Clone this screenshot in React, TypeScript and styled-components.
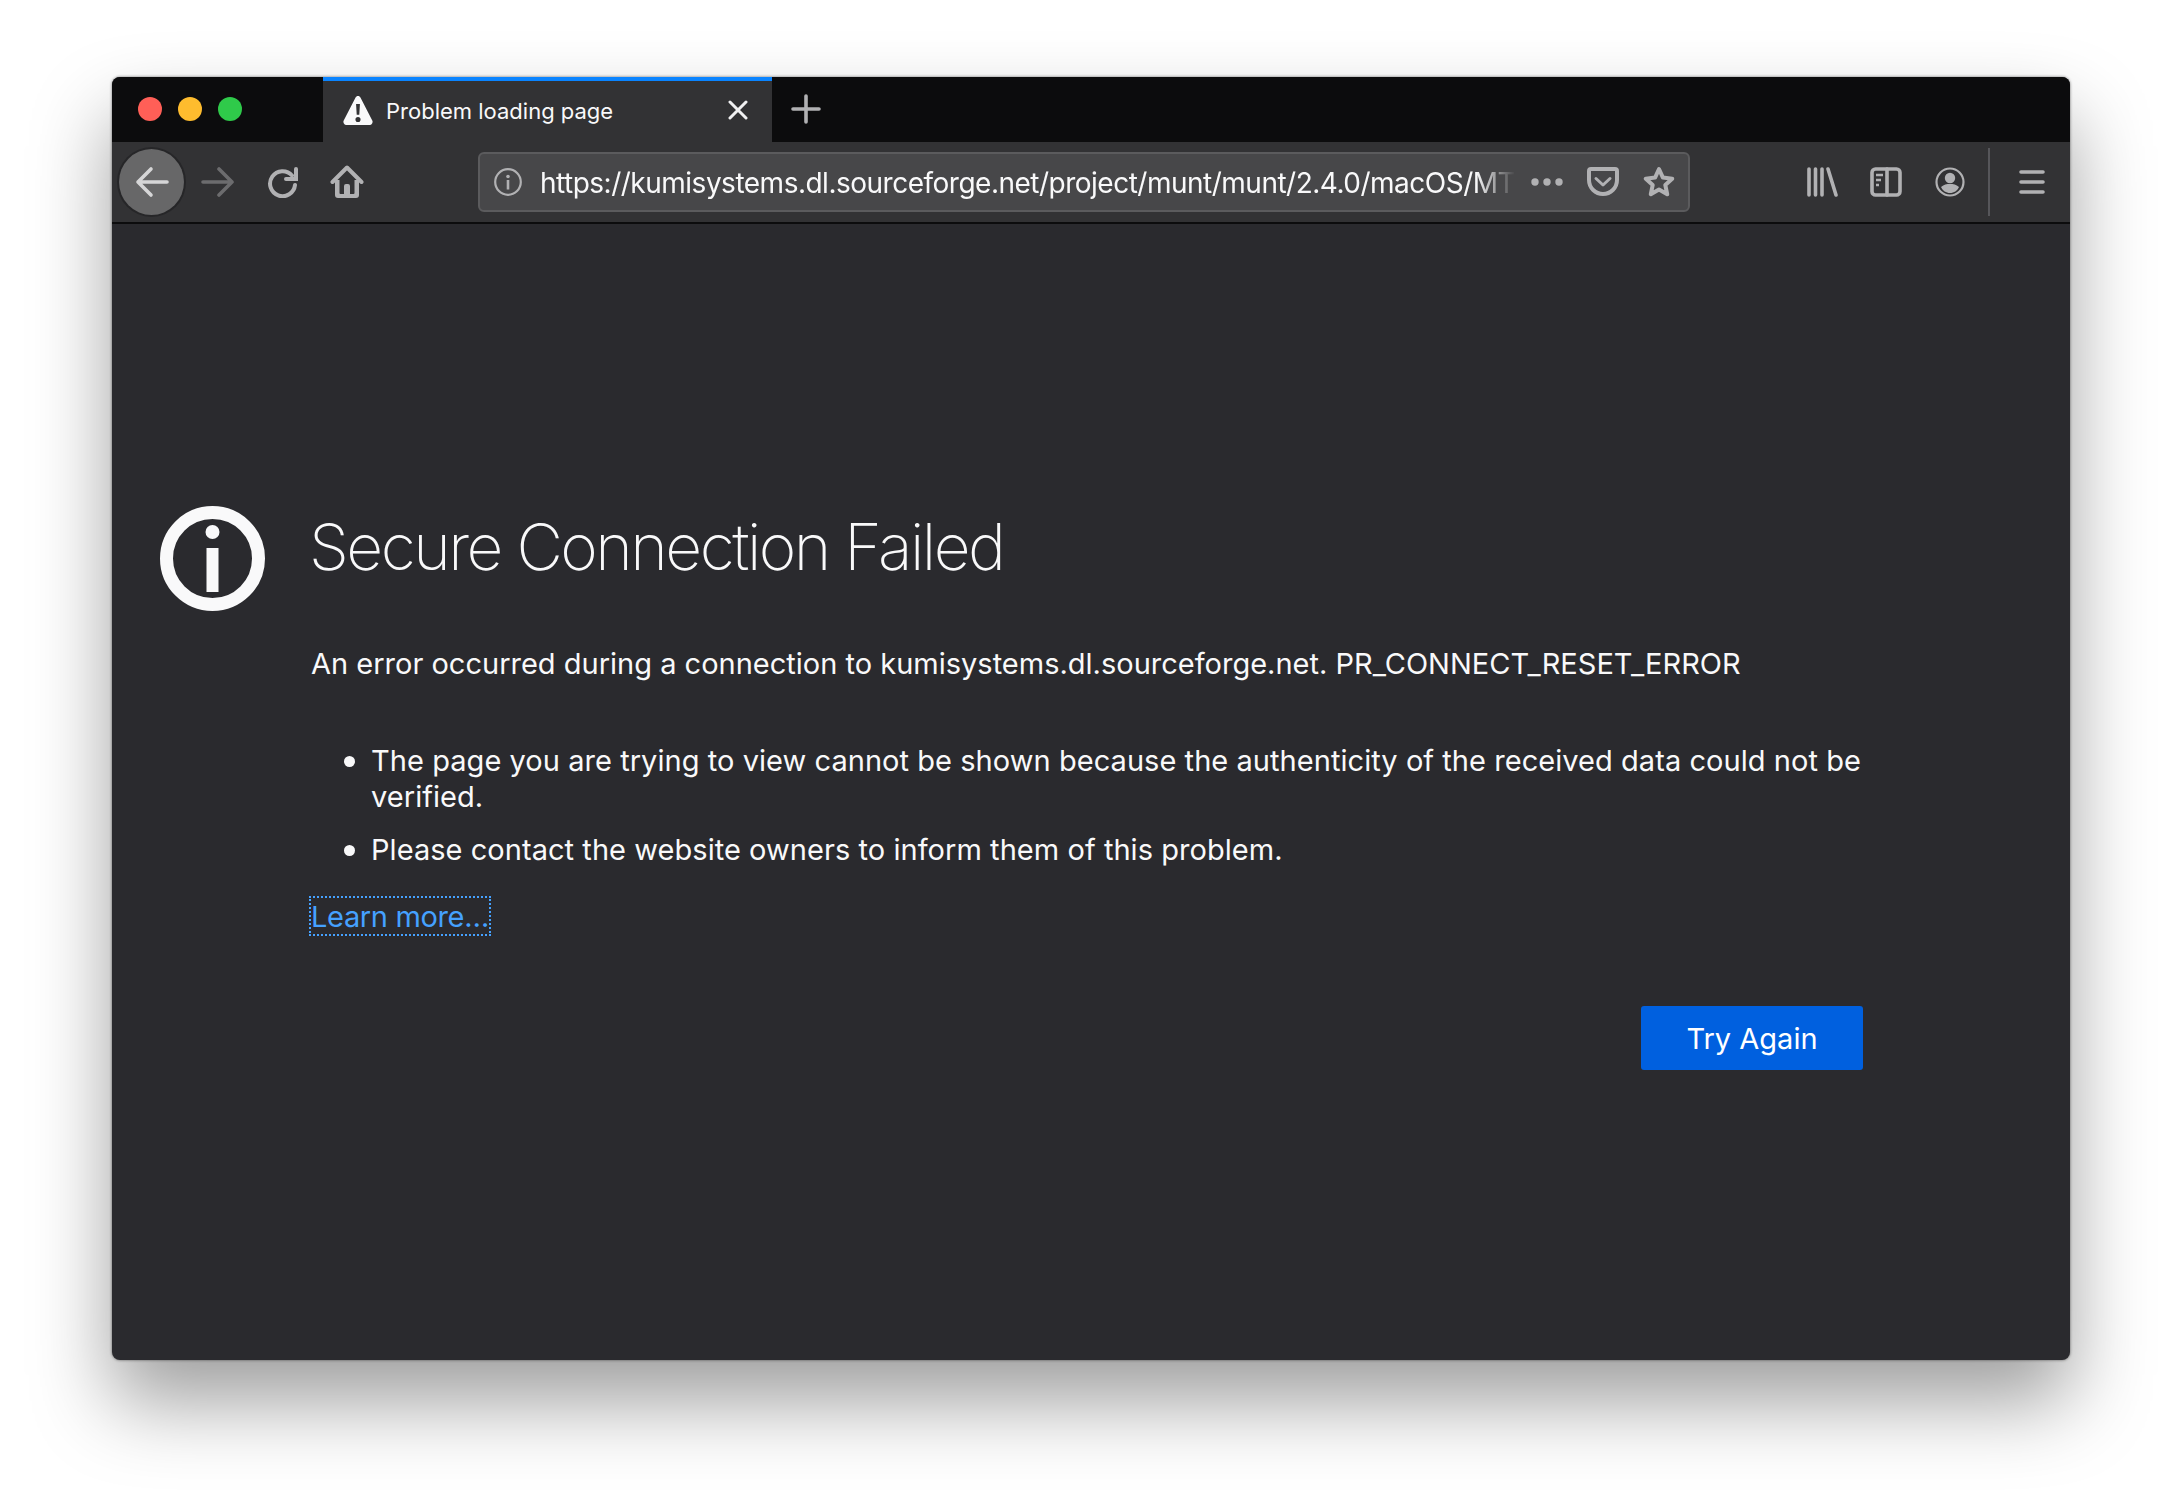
import React, { FC } from 'react';
import styled, { createGlobalStyle } from 'styled-components';

const GlobalStyle = createGlobalStyle`
  html, body {
    margin: 0;
    padding: 0;
    background: #ffffff;
    font-family: Inter, "Liberation Sans", sans-serif;
  }
`;

const Page = styled.div`
  width: 2182px;
  height: 1508px;
  box-sizing: border-box;
  padding: 77px 112px 0;
  overflow: hidden;
  background: #ffffff;
`;

const Window = styled.div`
  width: 1958px;
  height: 1283px;
  display: flex;
  flex-direction: column;
  border-radius: 8px;
  overflow: hidden;
  background: #2a2a2e;
  box-shadow: 0 42px 80px rgba(0, 0, 0, 0.38), 0 0 3px rgba(0, 0, 0, 0.55);
`;

const TabBar = styled.div`
  height: 65px;
  flex-shrink: 0;
  display: flex;
  background: #0c0c0d;
`;

const Lights = styled.div`
  width: 211px;
  display: flex;
  align-items: center;
  gap: 16px;
  padding: 0 0 2px 26px;
  box-sizing: border-box;
`;

const Light = styled.span<{ $color: string }>`
  width: 24px;
  height: 24px;
  border-radius: 50%;
  background: ${(p) => p.$color};
`;

const Tab = styled.div`
  width: 449px;
  box-sizing: border-box;
  display: flex;
  align-items: center;
  padding: 0 24px 4px 20px;
  background: #323234;
  border-top: 4px solid #0a84ff;
  color: #f9f9fa;
`;

const TabTitle = styled.span`
  flex: 1;
  margin-left: 13px;
  font-size: 22px;
  line-height: 30px;
  margin-top: 2px;
`;

const NewTab = styled.div`
  width: 68px;
  display: flex;
  align-items: center;
  justify-content: center;
  padding-bottom: 2px;
`;

const Toolbar = styled.div`
  height: 80px;
  flex-shrink: 0;
  display: flex;
  align-items: center;
  padding-left: 7px;
  background: #323234;
  border-bottom: 2px solid #0c0c0d;
`;

const NavButton = styled.div<{ $active?: boolean }>`
  width: 65px;
  height: 66px;
  flex-shrink: 0;
  display: flex;
  align-items: center;
  justify-content: center;
  border-radius: 50%;
  background: ${(p) => (p.$active ? '#676768' : 'transparent')};
  box-shadow: ${(p) => (p.$active ? '0 0 0 2px #262628' : 'none')};
`;

const UrlBar = styled.div`
  width: 1212px;
  height: 60px;
  margin: 0 100px 0 99px;
  box-sizing: border-box;
  flex-shrink: 0;
  display: flex;
  align-items: center;
  padding: 0 13px 0 14px;
  background: #474749;
  border: 2px solid #5b5b5d;
  border-radius: 6px;
`;

const UrlText = styled.div`
  width: 980px;
  margin: 2px 0 0 18px;
  font-size: 28px;
  line-height: 38px;
  letter-spacing: -0.5px;
  color: #f9f9fa;
  white-space: nowrap;
  overflow: hidden;
  -webkit-mask-image: linear-gradient(to right, #000 96%, transparent 100%);
  mask-image: linear-gradient(to right, #000 96%, transparent 100%);
`;

const UrlActions = styled.div`
  display: flex;
  align-items: center;
  margin-left: 16px;
  gap: 24px;
`;

const ToolButton = styled.div`
  width: 64px;
  display: flex;
  justify-content: center;
  flex-shrink: 0;
`;

const Divider = styled.div`
  width: 2px;
  height: 68px;
  margin: 0 10px 0 6px;
  background: #56565a;
`;

const Content = styled.main`
  flex: 1;
  display: flex;
  align-items: flex-start;
  padding: 282px 0 0 48px;
  color: #f9f9fa;
`;

const HeroIcon = styled.div`
  width: 105px;
  height: 105px;
  flex-shrink: 0;
  margin-right: 44px;
`;

const Main = styled.div`
  width: 1554px;
  padding-top: 1px;
`;

const Title = styled.h1`
  margin: 0;
  font-size: 64px;
  font-weight: 200;
  line-height: 80px;
  letter-spacing: -2.5px;
  white-space: nowrap;
`;

const Description = styled.p`
  margin: 59px 0 0 2px;
  font-size: 29px;
  font-weight: 430;
  line-height: 36px;
  white-space: nowrap;
`;

const Reasons = styled.ul`
  margin: 61px 0 0;
  padding: 0 0 0 62px;
  list-style: none;
  font-size: 29px;
  font-weight: 430;
  line-height: 36px;
  letter-spacing: 0.05px;
`;

const Reason = styled.li`
  position: relative;
  margin-bottom: 17px;

  &::before {
    content: '';
    position: absolute;
    left: -27px;
    top: 13px;
    width: 11px;
    height: 11px;
    border-radius: 50%;
    background: #f9f9fa;
  }
`;

const LearnMore = styled.a`
  display: inline-block;
  margin-top: 11px;
  height: 40px;
  box-sizing: border-box;
  border: 2px dotted #45a1ff;
  font-size: 29px;
  font-weight: 430;
  line-height: 38px;
  letter-spacing: -0.35px;
  color: #45a1ff;
  text-decoration: none;
`;

const Actions = styled.div`
  display: flex;
  justify-content: flex-end;
  margin-top: 70px;
`;

const TryAgain = styled.button`
  width: 222px;
  height: 64px;
  border: none;
  border-radius: 3px;
  background: #0060df;
  color: #ffffff;
  font-family: inherit;
  font-size: 29px;
  font-weight: 430;
  padding: 0;
`;

const Glyph = styled.svg<{ $size: number; $color?: string }>`
  width: ${(p) => p.$size}px;
  height: ${(p) => p.$size}px;
  display: block;
  flex-shrink: 0;
  color: ${(p) => p.$color ?? '#b1b1b3'};
`;

type IconProps = { size?: number; color?: string };

const lineProps = {
  fill: 'none',
  stroke: 'currentColor',
  strokeWidth: 3.6,
  strokeLinecap: 'round',
  strokeLinejoin: 'round',
} as const;

const ArrowLeft: FC<IconProps> = ({ color }) => (
  <Glyph $size={34} $color={color} viewBox="0 0 34 34">
    <path {...lineProps} d="M3 17H32M16 4 3 17l13 13" />
  </Glyph>
);

const ArrowRight: FC<IconProps> = ({ color }) => (
  <Glyph $size={34} $color={color} viewBox="0 0 34 34">
    <path {...lineProps} d="M3 17H32M19 4l13 13-13 13" />
  </Glyph>
);

const Reload = () => (
  <Glyph $size={32} viewBox="0 0 32 32">
    <path {...lineProps} strokeWidth={4} d="M26 9.500A12.500 12.500 0 1 0 29 19" />
    <path {...lineProps} strokeWidth={4} strokeLinejoin="miter" d="M30 3v10H20" />
  </Glyph>
);

const Home = () => (
  <Glyph $size={34} viewBox="0 0 34 34">
    <path {...lineProps} strokeWidth={4} d="M2.500 17 17 2.500 31.500 17" />
    <path
      fill="currentColor"
      fillRule="evenodd"
      d="M5 15h4.500v13a1 1 0 0 0 1 1H14V21a2 2 0 0 1 2-2h2a2 2 0 0 1 2 2v8h3.500a1 1 0 0 0 1-1V15H29v15a3 3 0 0 1-3 3H8a3 3 0 0 1-3-3z"
    />
    <path fill="currentColor" d="M14.500 26h5v7h-5zM16 21h2v2h-2z" />
  </Glyph>
);

const Warning = () => (
  <Glyph $size={30} $color="#f9f9fa" viewBox="0 0 28 28">
    <path
      fill="currentColor"
      fillRule="evenodd"
      d="M14 1c1 0 1.900.6 2.400 1.500l10.800 21A3 3 0 0 1 24.500 28h-21a3 3 0 0 1-2.700-4.500l10.800-21C12.100 1.600 13 1 14 1zm-1.800 7.500.6 10h2.400l.6-10zM14 20.500a2.400 2.400 0 1 0 0 4.800 2.400 2.400 0 0 0 0-4.800z"
    />
  </Glyph>
);

const Close = () => (
  <Glyph $size={20} $color="#f1f1f2" viewBox="0 0 20 20">
    <path {...lineProps} strokeWidth={3} d="M2 2l16 16M18 2 2 18" />
  </Glyph>
);

const Plus = () => (
  <Glyph $size={30} viewBox="0 0 30 30">
    <path {...lineProps} d="M15 2v26M2 15h26" />
  </Glyph>
);

const Info = () => (
  <Glyph $size={28} viewBox="0 0 28 28">
    <circle cx="14" cy="14" r="12.800" fill="none" stroke="currentColor" strokeWidth="2.200" />
    <circle cx="14" cy="8.500" r="1.800" fill="currentColor" />
    <rect x="12.700" y="12" width="2.600" height="9.500" fill="currentColor" />
  </Glyph>
);

const Dots = () => (
  <Glyph $size={32} viewBox="0 0 32 32">
    <circle cx="4" cy="16" r="3.700" fill="currentColor" />
    <circle cx="16" cy="16" r="3.700" fill="currentColor" />
    <circle cx="28" cy="16" r="3.700" fill="currentColor" />
  </Glyph>
);

const Pocket = () => (
  <Glyph $size={32} viewBox="0 0 32 32">
    <path
      {...lineProps}
      strokeWidth={4}
      d="M4 3h24a2 2 0 0 1 2 2v9c0 8-6.500 14-14 14S2 22 2 14V5a2 2 0 0 1 2-2z"
    />
    <path {...lineProps} strokeWidth={3} d="M9 12.500l7 6.500 7-6.500" />
  </Glyph>
);

const Star = () => (
  <Glyph $size={32} viewBox="0 0 32 32">
    <path
      {...lineProps}
      strokeWidth={4}
      d="M16 3l3.900 8.600 9.300 1.100-6.900 6.300 1.900 9.200L16 23.500l-8.200 4.700 1.900-9.200-6.900-6.300 9.300-1.100z"
    />
  </Glyph>
);

const Library = () => (
  <Glyph $size={32} viewBox="0 0 32 32">
    <path {...lineProps} d="M3 3v26M9.500 3v26M16 3v26M22 3l8 26" />
  </Glyph>
);

const Sidebar = () => (
  <Glyph $size={32} viewBox="0 0 32 32">
    <rect {...lineProps} x="2" y="3" width="28" height="26" rx="3.500" />
    <path {...lineProps} d="M17 3v26" />
    <path {...lineProps} strokeWidth={2.400} strokeLinecap="butt" d="M6 9h7M6 14h5M6 19h3" />
  </Glyph>
);

const Account = () => (
  <Glyph $size={30} viewBox="0 0 30 30">
    <circle cx="15" cy="15" r="13.500" fill="none" stroke="currentColor" strokeWidth="2.200" />
    <circle cx="15" cy="11" r="5.200" fill="currentColor" />
    <path fill="currentColor" d="M6 20c3-2.600 5.500-3 9-3s6 .4 9 3c-1.600 3.800-5 6-9 6s-7.400-2.200-9-6z" />
  </Glyph>
);

const Menu = () => (
  <Glyph $size={26} viewBox="0 0 26 26">
    <path {...lineProps} d="M2 3h22M2 13h22M2 23h22" />
  </Glyph>
);

const BigInfo = () => (
  <Glyph $size={105} $color="#f9f9fa" viewBox="0 0 105 105">
    <circle cx="52.500" cy="52.500" r="46" fill="none" stroke="currentColor" strokeWidth="13" />
    <circle cx="52.500" cy="26" r="7" fill="currentColor" />
    <rect x="46.500" y="42" width="12" height="44" fill="currentColor" />
  </Glyph>
);

const App = () => (
  <Page>
    <GlobalStyle />
    <Window>
      <TabBar>
        <Lights>
          <Light $color="#ff5f57" />
          <Light $color="#febc2e" />
          <Light $color="#2fca4a" />
        </Lights>
        <Tab>
          <Warning />
          <TabTitle>Problem loading page</TabTitle>
          <Close />
        </Tab>
        <NewTab>
          <Plus />
        </NewTab>
      </TabBar>
      <Toolbar>
        <NavButton $active>
          <ArrowLeft color="#d6d6d7" />
        </NavButton>
        <NavButton>
          <ArrowRight color="#6c6c6e" />
        </NavButton>
        <NavButton>
          <Reload />
        </NavButton>
        <NavButton>
          <Home />
        </NavButton>
        <UrlBar>
          <Info />
          <UrlText>https://kumisystems.dl.sourceforge.net/project/munt/munt/2.4.0/macOS/MT32Emu.dmg</UrlText>
          <UrlActions>
            <Dots />
            <Pocket />
            <Star />
          </UrlActions>
        </UrlBar>
        <ToolButton>
          <Library />
        </ToolButton>
        <ToolButton>
          <Sidebar />
        </ToolButton>
        <ToolButton>
          <Account />
        </ToolButton>
        <Divider />
        <ToolButton>
          <Menu />
        </ToolButton>
      </Toolbar>
      <Content>
        <HeroIcon>
          <BigInfo />
        </HeroIcon>
        <Main>
          <Title>Secure Connection Failed</Title>
          <Description>
            An error occurred during a connection to kumisystems.dl.sourceforge.net. PR_CONNECT_RESET_ERROR
          </Description>
          <Reasons>
            <Reason>
              The page you are trying to view cannot be shown because the authenticity of the received data could not be verified.
            </Reason>
            <Reason>Please contact the website owners to inform them of this problem.</Reason>
          </Reasons>
          <LearnMore href="#">Learn more…</LearnMore>
          <Actions>
            <TryAgain>Try Again</TryAgain>
          </Actions>
        </Main>
      </Content>
    </Window>
  </Page>
);

export default App;
